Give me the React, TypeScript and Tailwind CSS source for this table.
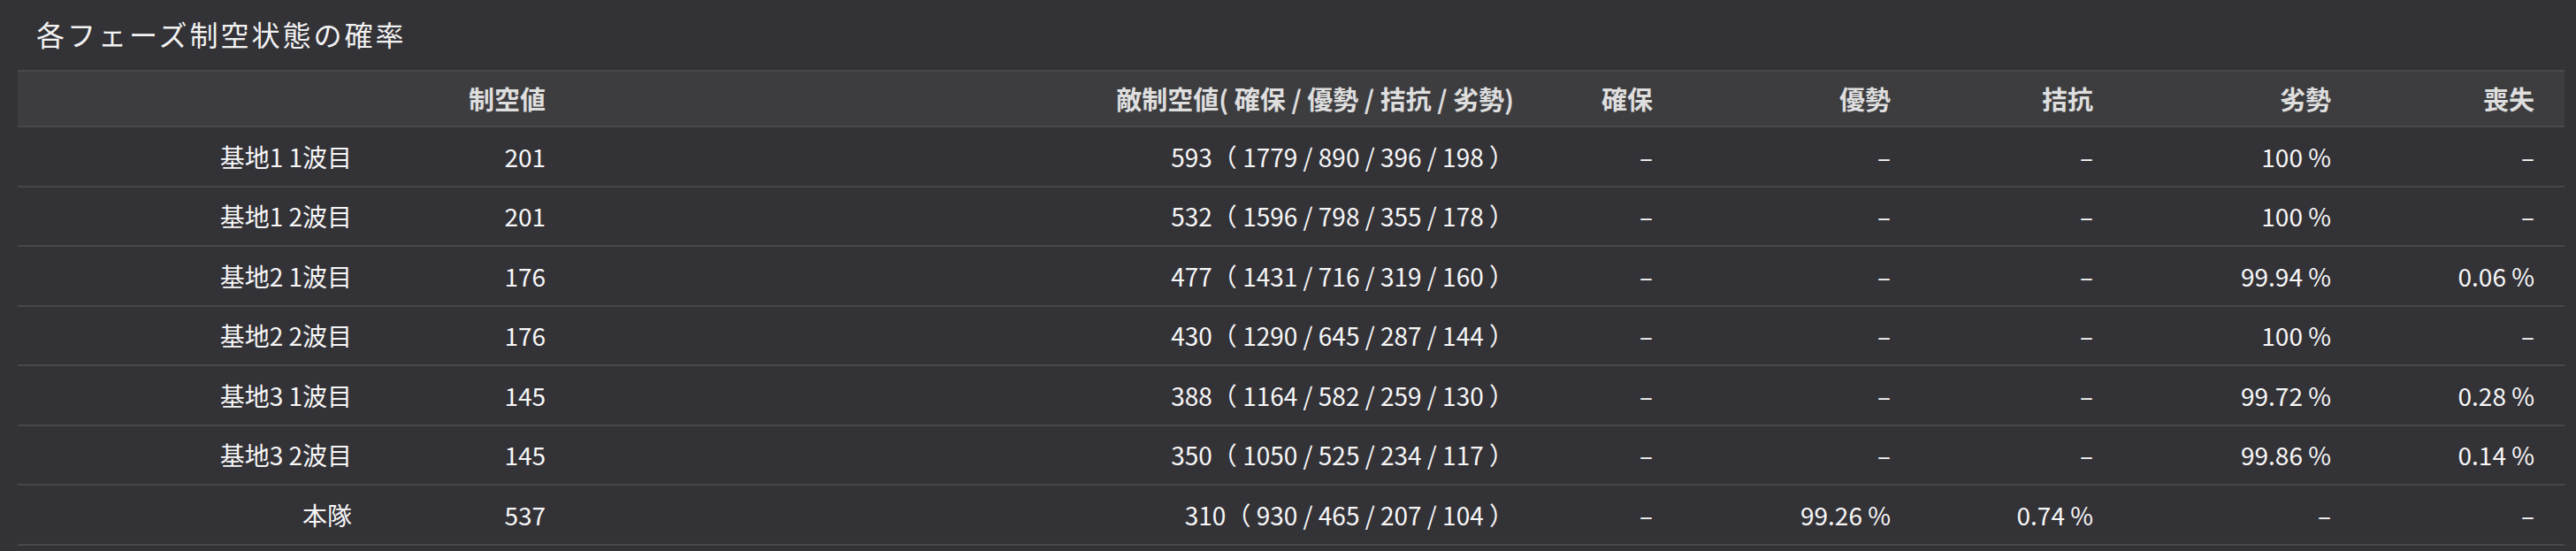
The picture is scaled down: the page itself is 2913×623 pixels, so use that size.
type Row = {
  name: string;
  air: number;
  enemy: string;
  cells: string[];
};

const ROWS: Row[] = [
  { name: "基地1 1波目", air: 201, enemy: "593（ 1779 / 890 / 396 / 198 ）", cells: ["–", "–", "–", "100 %", "–"] },
  { name: "基地1 2波目", air: 201, enemy: "532（ 1596 / 798 / 355 / 178 ）", cells: ["–", "–", "–", "100 %", "–"] },
  { name: "基地2 1波目", air: 176, enemy: "477（ 1431 / 716 / 319 / 160 ）", cells: ["–", "–", "–", "99.94 %", "0.06 %"] },
  { name: "基地2 2波目", air: 176, enemy: "430（ 1290 / 645 / 287 / 144 ）", cells: ["–", "–", "–", "100 %", "–"] },
  { name: "基地3 1波目", air: 145, enemy: "388（ 1164 / 582 / 259 / 130 ）", cells: ["–", "–", "–", "99.72 %", "0.28 %"] },
  { name: "基地3 2波目", air: 145, enemy: "350（ 1050 / 525 / 234 / 117 ）", cells: ["–", "–", "–", "99.86 %", "0.14 %"] },
  { name: "本隊", air: 537, enemy: "310（ 930 / 465 / 207 / 104 ）", cells: ["–", "99.26 %", "0.74 %", "–", "–"] },
];

const HEADERS = ["", "制空値", "敵制空値( 確保 / 優勢 / 拮抗 / 劣勢)", "確保", "優勢", "拮抗", "劣勢", "喪失"];

const GRID =
  "grid grid-cols-[394px_219px_1095px_157px_269px_229px_269px_1fr]";

function cellClass(i: number) {
  return i === 7 ? "text-right pr-[34px]" : "text-right pr-[16px]";
}

export default function App() {
  return (
    <div
      className="w-[2913px] h-[623px] overflow-hidden bg-[#333237] text-white"
      style={{ fontFamily: '"Noto Sans CJK JP", "Noto Sans", sans-serif' }}
    >
      <div className="h-[79px] pl-[41px] pt-[14px] text-[32px] leading-[48px] tracking-[3px] text-[#f2f2f2]">
        各フェーズ制空状態の確率
      </div>

      <div className="ml-[20px] mr-[13px]">
        {/* header */}
        <div
          className={`${GRID} h-[65px] items-center border-y-2 border-[#48484c] bg-[#3d3d40] text-[29px] font-bold text-[#dedede]`}
        >
          {HEADERS.map((h, i) => (
            <div key={i} className={cellClass(i)}>
              {h}
            </div>
          ))}
        </div>

        {/* body */}
        {ROWS.map((r) => {
          const vals = [r.name, String(r.air), r.enemy, ...r.cells];
          return (
            <div
              key={r.name}
              className={`${GRID} h-[67.5px] items-center border-b-2 border-[#48484c] text-[28px] text-[#f7f7f7]`}
            >
              {vals.map((v, i) => (
                <div key={i} className={`${cellClass(i)} whitespace-nowrap`}>
                  {v}
                </div>
              ))}
            </div>
          );
        })}
      </div>
    </div>
  );
}
